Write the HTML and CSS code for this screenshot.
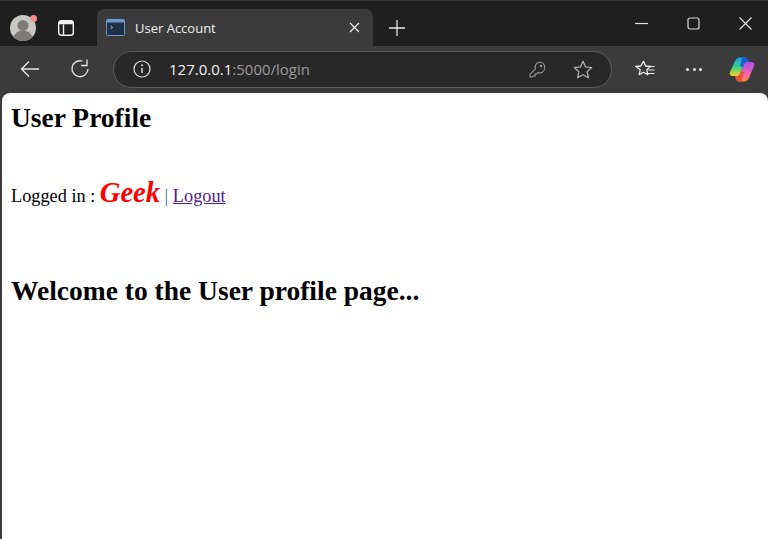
FILE: index.html
```html
<!DOCTYPE html>
<html lang="en">
<head>
    <meta charset="UTF-8">
    <meta name="viewport" content="width=device-width, initial-scale=1.0">
    <title>User Account</title>
    <link rel="stylesheet" href="styles.css">
</head>
<body>
    <div class="tabstrip">
        <div class="avatar">
            <svg width="26" height="26" viewBox="0 0 26 26">
                <circle cx="13" cy="13" r="13" fill="#c9c7c4"/>
                <circle cx="13" cy="10.5" r="5.5" fill="#7d7c7b"/>
                <path d="M3.6 22c1.6-4.6 5-6.600 9.400-6.600s7.800 2 9.400 6.600a13 13 0 0 1-18.800 0z" fill="#7d7c7b"/>
            </svg>
            <span class="avatar-dot"></span>
        </div>
        <svg class="tabs-btn" width="18" height="18" viewBox="0 0 18 18" fill="none">
            <rect x="1.700" y="1.700" width="14.600" height="14.600" rx="2.500" stroke="#f2f2f2" stroke-width="1.400"/>
            <path d="M1.700 5.200h14.600v-1a2.500 2.500 0 0 0-2.500-2.500H4.200a2.500 2.500 0 0 0-2.500 2.500z" fill="#f2f2f2"/>
            <path d="M6.500 5.500v10.500" stroke="#f2f2f2" stroke-width="1.400"/>
        </svg>
        <div class="tab">
            <svg class="favicon" width="19" height="17" viewBox="0 0 19 17">
                <rect x="0.500" y="0.500" width="18" height="16" rx="1" fill="#1f2f45" stroke="#6b96c8"/>
                <rect x="1" y="1" width="17" height="2.500" fill="#6b9ad2"/>
                <path d="M4.500 7l2 1.500-2 1.500" fill="none" stroke="#d8d8d8" stroke-width="0.800"/>
            </svg>
            <span class="tab-title">User Account</span>
            <svg class="tab-close" width="11" height="11" viewBox="0 0 11 11">
                <path d="M1 1l9 9M10 1l-9 9" stroke="#eee" stroke-width="1.300"/>
            </svg>
        </div>
        <svg class="new-tab" width="18" height="18" viewBox="0 0 18 18">
            <path d="M9 1v16M1 9h16" stroke="#e8e8e8" stroke-width="1.300"/>
        </svg>
        <div class="window-btns">
            <svg width="13" height="13" viewBox="0 0 13 13"><path d="M0 6.500h13" stroke="#e0e0e0" stroke-width="1.200"/></svg>
            <svg width="13" height="13" viewBox="0 0 13 13" fill="none"><rect x="1" y="1" width="11" height="11" rx="2" stroke="#d8d8d8" stroke-width="1.200"/></svg>
            <svg width="13" height="13" viewBox="0 0 13 13"><path d="M.5.500l12 12M12.500.500l-12 12" stroke="#e8e8e8" stroke-width="1.100"/></svg>
        </div>
    </div>

    <div class="toolbar">
        <svg class="nav-icon back" width="20" height="18" viewBox="0 0 20 18" fill="none">
            <path d="M19 9H1.500M9 1.500L1.500 9 9 16.500" stroke="#e8e8e8" stroke-width="1.300"/>
        </svg>
        <svg class="nav-icon reload" width="20" height="20" viewBox="0 0 20 20" fill="none">
            <path d="M12.300 2.100A8 8 0 1 0 18 10" stroke="#e0e0e0" stroke-width="1.300"/>
            <path d="M17 .5v6h-6" stroke="#e0e0e0" stroke-width="1.300"/>
        </svg>
        <div class="addressbar">
            <svg class="info" width="18" height="18" viewBox="0 0 18 18" fill="none">
                <circle cx="9" cy="9" r="8" stroke="#e4e4e4" stroke-width="1.200"/>
                <path d="M9 7.800v5.200" stroke="#e4e4e4" stroke-width="1.400"/>
                <circle cx="9" cy="5.200" r="1" fill="#e4e4e4"/>
            </svg>
            <span class="url"><span class="host">127.0.0.1</span>:5000/login</span>
            <svg class="key" width="17" height="17" viewBox="0 0 17 17" fill="none">
                <path d="M10.500 1a5.500 5.500 0 0 1 .8 10.900c-.9.100-1.700 0-2.400-.3L7.500 13H6v2H4.200l-.8 1H1v-2.600l5.400-5.500A5.500 5.500 0 0 1 10.500 1z" stroke="#9a9a9a" stroke-width="1.100"/>
                <circle cx="12" cy="5" r="1.200" fill="#9a9a9a"/>
            </svg>
            <svg class="star" width="20" height="19" viewBox="0 0 20 19" fill="none">
                <path d="M10 1.300l2.600 5.600 6.100.7-4.500 4.200 1.200 6-5.400-3-5.400 3 1.200-6L1.300 7.600l6.100-.7z" stroke="#b0b0b0" stroke-width="1.300" stroke-linejoin="round"/>
            </svg>
        </div>
        <svg class="favorites" width="20" height="18" viewBox="0 0 20 18" fill="none">
            <path d="M8.500 1.300l2.100 4.700 4.900.5-3.700 3.300 1 4.900-4.300-2.500-4.300 2.500 1-4.900L.9 6.500 5.800 6z" stroke="#efefef" stroke-width="1.300" stroke-linejoin="round"/>
            <path d="M12.500 6.500h7M13.500 10h6M13 13.500h6.500" stroke="#efefef" stroke-width="1.200"/>
        </svg>
        <div class="more"><span></span><span></span><span></span></div>
        <svg class="copilot" width="26" height="25" viewBox="0 0 26 25">
            <defs>
                <linearGradient id="copilotLeft" x1="0" y1="0" x2="0" y2="1">
                    <stop offset="0" stop-color="#1e9bf5"/>
                    <stop offset="0.500" stop-color="#2fd08a"/>
                    <stop offset="1" stop-color="#fbd320"/>
                </linearGradient>
                <linearGradient id="copilotRight" x1="0" y1="0" x2="0" y2="1">
                    <stop offset="0" stop-color="#a84ff0"/>
                    <stop offset="0.600" stop-color="#f565ac"/>
                    <stop offset="1" stop-color="#fb8550"/>
                </linearGradient>
            </defs>
            <path d="M6 4C7 1.800 8.500.5 10.500.5H16c1 0 1.500.5 1 1.500L11 17c-.6 1.500-1.500 2-3 2H3.500C1.500 19 .2 17.600.8 15.500z" fill="url(#copilotLeft)"/>
            <path d="M20 21c-1 2.200-2.500 3.500-4.500 3.500H10c-1 0-1.500-.5-1-1.500L15 7c.6-1.500 1.500-2 3-2h4.500c2 0 3.300 1.400 2.700 3.500z" fill="url(#copilotRight)"/>
            <path d="M12.500.5H16c2 0 3.500 1.500 4 4.500h-2c-1.500 0-2.400.5-3 2l-1 3-3-1 2-7c.2-.7.200-1.500-.5-1.500z" fill="#1f5fd0"/>
            <path d="M13.500 24.500H10c-2 0-3.500-1.500-4-5.500h2c1.500 0 2.400-.5 3-2l1-3 3 1-2 8c-.2.700-.2 1.500.5 1.500z" fill="#e8503a"/>
        </svg>
    </div>

    <main class="page">
        <h2>User Profile</h2>
        <br>
        <p class="login-line">Logged in : <span class="username">Geek</span> <span class="divider">|</span> <a href="#">Logout</a></p>
        <br>
        <h2 class="welcome">Welcome to the User profile page...</h2>
    </main>
</body>
</html>
```

FILE: styles.css
```css
html, body {
    height: 100%;
}

body {
    margin: 0;
    display: flex;
    flex-direction: column;
    overflow: hidden;
    background: #3b3b3b;
}

svg {
    display: block;
    flex-shrink: 0;
}

.tabstrip {
    height: 46px;
    box-sizing: border-box;
    padding: 8px 0 0 10px;
    display: flex;
    align-items: center;
    background: #1f1f1f;
    border-top: 1px solid #3a3a3a;
    flex-shrink: 0;
}

.avatar {
    position: relative;
    width: 26px;
    height: 26px;
}

.avatar-dot {
    position: absolute;
    top: 0;
    right: -1px;
    width: 7px;
    height: 7px;
    border-radius: 50%;
    background: #f58f8f;
}

.tabs-btn {
    margin-left: 21px;
}

.tab {
    width: 276px;
    height: 37px;
    box-sizing: border-box;
    margin-left: 22px;
    padding: 0 13px 0 9px;
    display: flex;
    align-items: center;
    background: #3b3b3b;
    border-radius: 8px 8px 0 0;
}

.tab-title {
    margin-left: 10px;
    flex: 1;
    font: 13px "Open Sans", "Noto Sans", sans-serif;
    color: #f0f0f0;
}

.new-tab {
    margin-left: 15px;
}

.window-btns {
    margin: -9px 16px 0 auto;
    display: flex;
    gap: 39px;
}

.toolbar {
    height: 47px;
    padding: 0 13px 1px 20px;
    box-sizing: border-box;
    display: flex;
    align-items: center;
    background: #3b3b3b;
    flex-shrink: 0;
}

.reload {
    margin-left: 30px;
}

.addressbar {
    width: 504px;
    height: 37px;
    box-sizing: border-box;
    margin-left: 23px;
    padding: 0 18px 0 19px;
    display: flex;
    align-items: center;
    background: #282828;
    border: 1px solid #5c5c5c;
    border-radius: 19px;
}

.url {
    margin-left: 18px;
    flex: 1;
    font: 15px "Open Sans", "Noto Sans", sans-serif;
    color: #9a9a9a;
}

.host {
    color: #f4f4f4;
}

.star {
    margin-left: 27px;
}

.favorites {
    margin-left: 23px;
}

.more {
    margin-left: 31px;
    display: flex;
    gap: 3.500px;
}

.more span {
    width: 3px;
    height: 3px;
    border-radius: 50%;
    background: #eee;
}

.copilot {
    margin-left: 27px;
}

.page {
    flex: 1;
    margin-left: 2px;
    padding: 0 9px;
    background: #fff;
    border-radius: 8px 8px 0 0;
    font-family: "Liberation Serif", serif;
    font-size: 18.300px;
    color: #000;
}

.page h2 {
    margin: 0;
    padding-top: 9px;
    font-size: 27.500px;
}

.login-line {
    margin: 22px 0 0;
}

.username {
    font-size: 28.500px;
    font-weight: bold;
    font-style: italic;
    color: #f00;
}

.divider {
    color: #4a6a8a;
}

a {
    color: #551a8b;
}

.page h2.welcome {
    margin-top: 36px;
}
```
